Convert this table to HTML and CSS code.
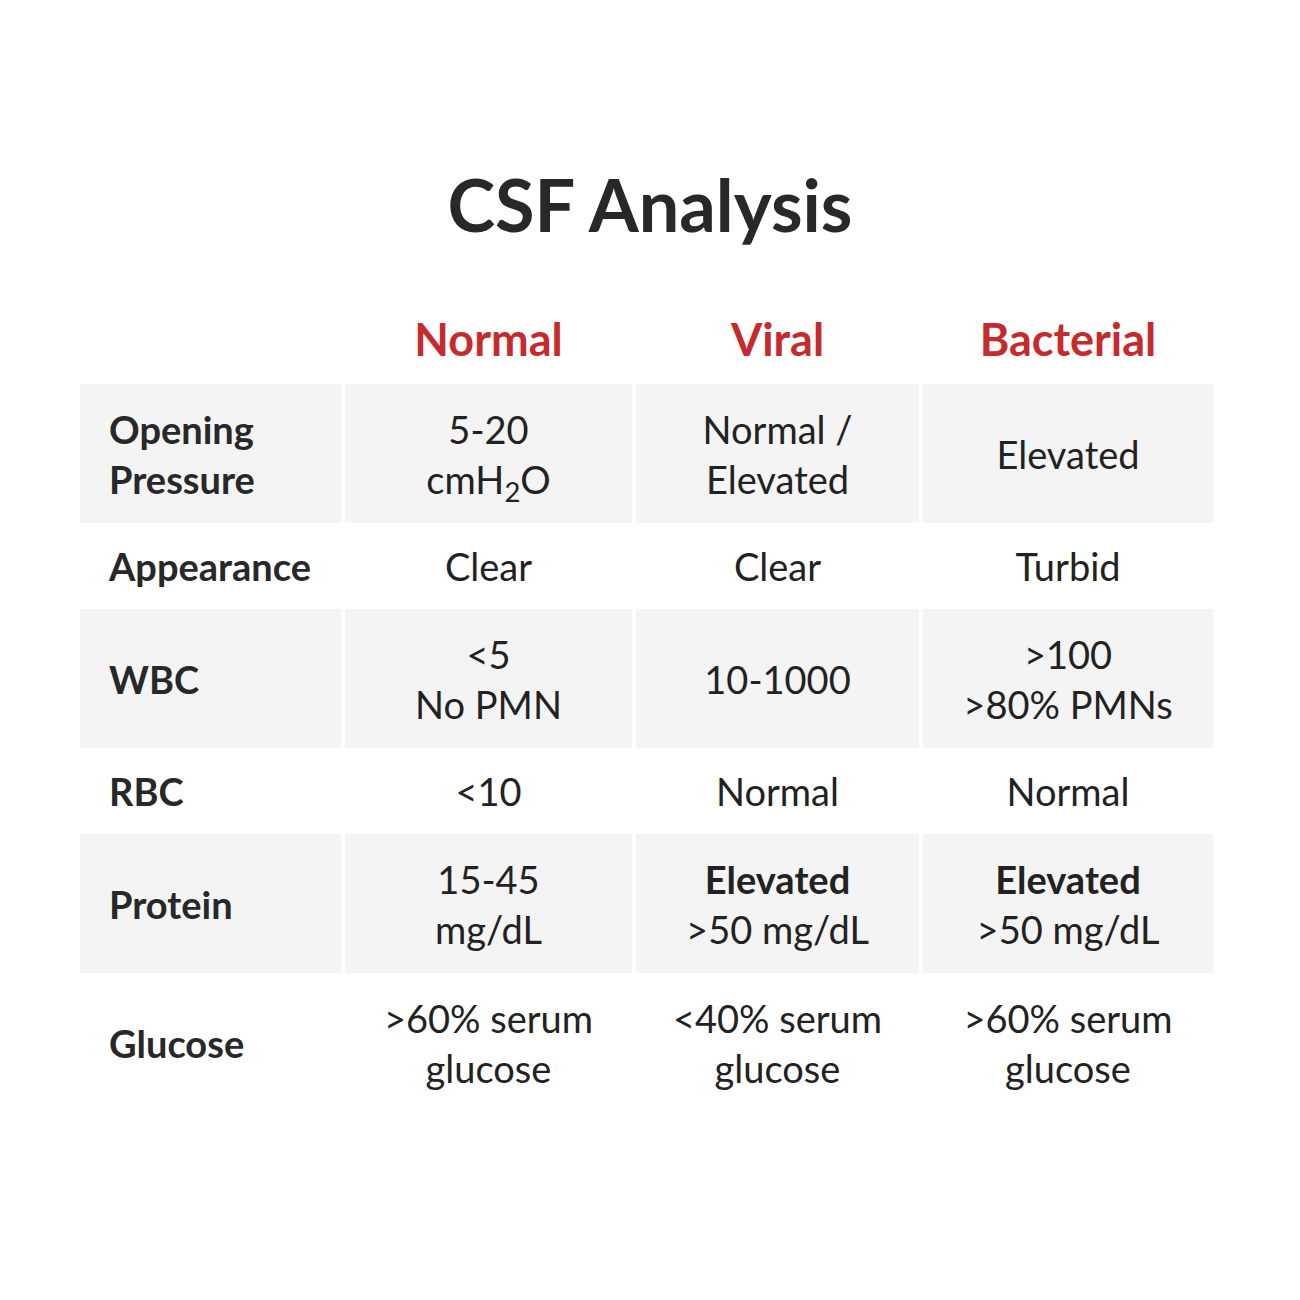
FILE: index.html
```html
<!DOCTYPE html>
<html lang="en">
<head>
<meta charset="utf-8">
<title>CSF Analysis</title>
<link rel="stylesheet" href="styles.css">
</head>
<body>
<main class="page">
  <h1 class="title">CSF Analysis</h1>
  <div class="table">
    <div class="head blank"></div>
    <div class="head">Normal</div>
    <div class="head">Viral</div>
    <div class="head">Bacterial</div>

    <div class="cell label shade"><span class="v">Opening<br>Pressure</span></div>
    <div class="cell shade"><span class="v">5-20<br>cmH<sub>2</sub>O</span></div>
    <div class="cell shade"><span class="v">Normal /<br>Elevated</span></div>
    <div class="cell shade"><span class="v">Elevated</span></div>

    <div class="cell label"><span class="v">Appearance</span></div>
    <div class="cell"><span class="v">Clear</span></div>
    <div class="cell"><span class="v">Clear</span></div>
    <div class="cell"><span class="v">Turbid</span></div>

    <div class="cell label shade"><span class="v">WBC</span></div>
    <div class="cell shade"><span class="v">&lt;5<br>No PMN</span></div>
    <div class="cell shade"><span class="v">10-1000</span></div>
    <div class="cell shade"><span class="v">&gt;100<br>&gt;80% PMNs</span></div>

    <div class="cell label"><span class="v">RBC</span></div>
    <div class="cell"><span class="v">&lt;10</span></div>
    <div class="cell"><span class="v">Normal</span></div>
    <div class="cell"><span class="v">Normal</span></div>

    <div class="cell label shade"><span class="v">Protein</span></div>
    <div class="cell shade"><span class="v">15-45<br>mg/dL</span></div>
    <div class="cell shade"><span class="v"><b>Elevated</b><br>&gt;50 mg/dL</span></div>
    <div class="cell shade"><span class="v"><b>Elevated</b><br>&gt;50 mg/dL</span></div>

    <div class="cell label tall"><span class="v">Glucose</span></div>
    <div class="cell tall"><span class="v">&gt;60% serum<br>glucose</span></div>
    <div class="cell tall"><span class="v">&lt;40% serum<br>glucose</span></div>
    <div class="cell tall"><span class="v">&gt;60% serum<br>glucose</span></div>
  </div>
</main>
</body>
</html>
```

FILE: styles.css
```css
html, body {
  margin: 0;
  padding: 0;
  background: #ffffff;
}

body {
  font-family: "Lato", "Noto Sans", sans-serif;
  color: #252525;
}

.page {
  width: 1300px;
  height: 1300px;
  box-sizing: border-box;
  padding: 168px 0 0 80px;
}

.title {
  margin: 0;
  width: 1140px;
  text-align: center;
  font-size: 72px;
  line-height: 72px;
  font-weight: 700;
  color: #282828;
}

.table {
  margin-top: 76px;
  display: grid;
  grid-template-columns: 261px 287px 283px 290px;
  column-gap: 4px;
  width: 1133px;
}

.head {
  text-align: center;
  font-size: 45px;
  line-height: 46px;
  font-weight: 700;
  color: #c52b2d;
  padding-bottom: 22px;
}

.cell {
  display: flex;
  align-items: center;
  justify-content: center;
  text-align: center;
  font-size: 38px;
  line-height: 50px;
  padding: 18px 0;
  color: #222222;
}

.cell.shade {
  background: #f4f4f4;
  padding: 19.5px 0;
}

.cell.tall {
  padding: 19.5px 0;
}

.cell.label {
  justify-content: flex-start;
  text-align: left;
  padding-left: 29px;
  font-weight: 700;
  color: #282828;
}

.v {
  display: block;
}

.cell b {
  font-weight: 700;
}

.cell sub {
  font-size: 0.72em;
  line-height: 0;
  vertical-align: -0.28em;
}
```
